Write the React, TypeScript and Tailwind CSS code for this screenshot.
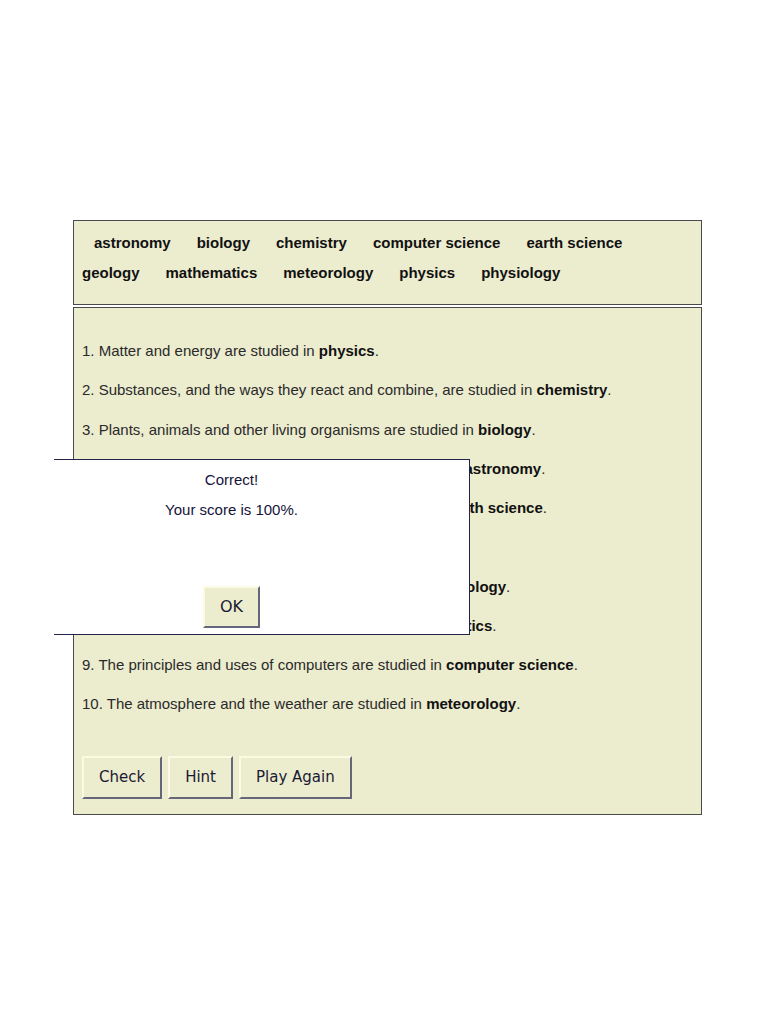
import React from "react";

const words = [
  "astronomy",
  "biology",
  "chemistry",
  "computer science",
  "earth science",
  "geology",
  "mathematics",
  "meteorology",
  "physics",
  "physiology",
];

const sentences: [string, string][] = [
  ["1. Matter and energy are studied in ", "physics"],
  ["2. Substances, and the ways they react and combine, are studied in ", "chemistry"],
  ["3. Plants, animals and other living organisms are studied in ", "biology"],
  ["4. The stars, the planets, and the asteroids are studied in ", "astronomy"],
  ["5. The Earth and all of its many systems are studied in ", "earth science"],
  ["6. The rocks of the Earth are studied in ", "geology"],
  ["7. The inner workings of living bodies are studied in ", "physiology"],
  ["8. Numbers, quantity and shapes are studied in ", "mathematics"],
  ["9. The principles and uses of computers are studied in ", "computer science"],
  ["10. The atmosphere and the weather are studied in ", "meteorology"],
];

const btn =
  "h-[43px] px-[15px] bg-[#ececcf] border-2 border-t-[#fbfbe2] border-l-[#fbfbe2] border-b-[#66667a] border-r-[#66667a] text-[15px] text-[#1a1a33] [font-family:'DejaVu_Sans',Verdana,sans-serif]";

export default function App() {
  return (
    <div className="relative w-[768px] min-h-[1024px] bg-white [font-family:'Liberation_Sans',Arial,sans-serif]">
      <div className="pt-[220px] ml-[73px] w-[629px]">
        <div className="border border-[#4a4a4a] bg-[#ececcf] pl-[8px] pr-[8px] pt-[7px] pb-[16px]">
          <div className="flex flex-wrap gap-x-[26px] text-[15px] leading-[30px] font-bold text-[#111]">
            {words.map((w, i) => (
              <span key={w} className={i === 0 ? "ml-[12px]" : ""}>
                {w}
              </span>
            ))}
          </div>
        </div>
        <div className="mt-[2px] border border-[#4a4a4a] bg-[#ececcf] pl-[8px] pr-[8px] pt-[33px] pb-[15px]">
          {sentences.map(([t, b]) => (
            <p key={b} className="text-[15px] leading-[19px] mb-[20.25px] text-[#2a2a2a]">
              {t}
              <b className="text-[#111]">{b}</b>.
            </p>
          ))}
          <div className="flex gap-[6px] pt-[22px]">
            <button className={btn}>Check</button>
            <button className={btn}>Hint</button>
            <button className={btn}>Play Again</button>
          </div>
        </div>
      </div>

      <div className="absolute left-[54px] top-[459px] w-[416px] h-[176px] bg-white border-t border-r border-b border-[#22224a]">
        <div className="flex flex-col items-center pr-[60px] text-[#14143a] text-[15px]">
          <div className="mt-[10px] leading-[20px]">Correct!</div>
          <div className="mt-[10px] leading-[20px]">Your score is 100%.</div>
          <button className="mt-[66px] w-[57px] h-[42px] bg-[#ececcf] border-2 border-t-[#fbfbe2] border-l-[#fbfbe2] border-b-[#66667a] border-r-[#66667a] text-[16px] text-[#1a1a33] [font-family:'DejaVu_Sans',Verdana,sans-serif]">
            OK
          </button>
        </div>
      </div>
    </div>
  );
}
